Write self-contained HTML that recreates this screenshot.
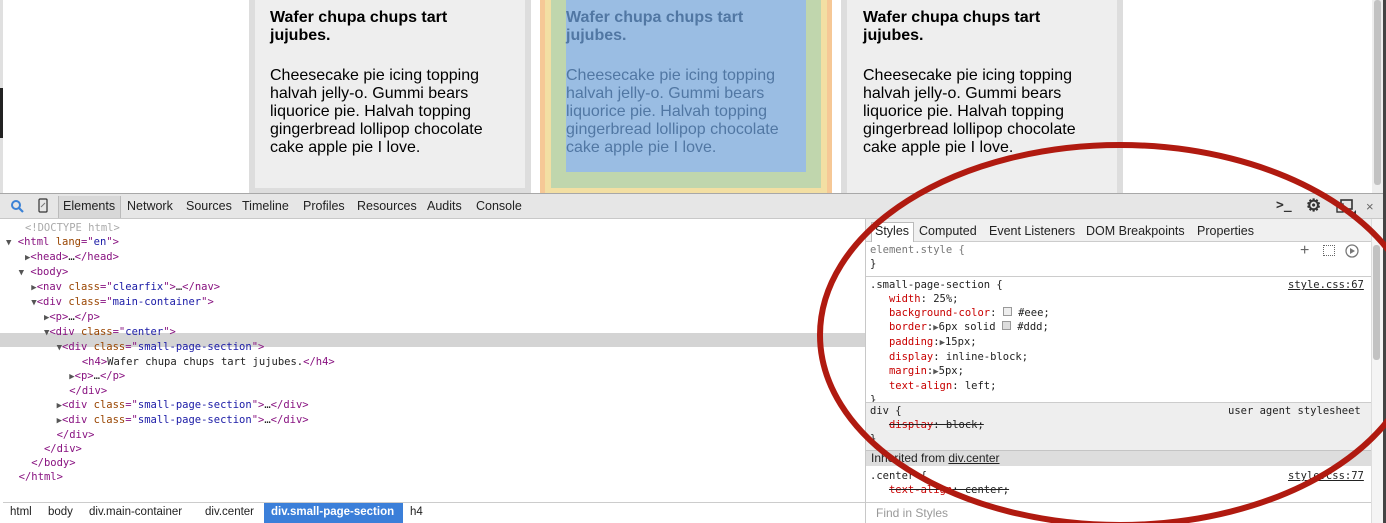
<!DOCTYPE html>
<html><head><style>
*{margin:0;padding:0;box-sizing:border-box}
body{width:1386px;height:523px;overflow:hidden;position:relative;background:#fff;font-family:"Liberation Sans",sans-serif}
.abs{position:absolute}
.box{position:absolute;font-size:16px;line-height:18px;color:#000}
.box h4{font-size:16px;font-weight:bold;margin-bottom:22px}
.mono{font-family:"DejaVu Sans Mono","Liberation Mono",monospace;font-size:10.5px;line-height:14px;white-space:pre}
.tag{color:#881280}.an{color:#994500}.av{color:#1a1aa6}
.tri{color:#555;font-size:9px}
.pn{color:#c80000}
.tb{font-family:"Liberation Sans",sans-serif;font-size:12.5px;color:#222}
</style></head><body>
<!-- page area -->
<div class="abs" style="left:0;top:0;width:3px;height:193px;background:#e0e0e0"></div>
<div class="abs" style="left:0;top:88px;width:3px;height:50px;background:#222"></div>
<div class="box" style="left:249px;top:-10px;width:282px;height:203px;background:#ddd;border:6px solid #ddd;border-top:0">
 <div style="background:#eee;height:198px;padding:19px 15px 0 15px"><h4>Wafer chupa chups tart jujubes.</h4>Cheesecake pie icing topping halvah jelly-o. Gummi bears liquorice pie. Halvah topping gingerbread lollipop chocolate cake apple pie I love.</div>
</div>
<div class="abs" style="left:540px;top:0;width:292px;height:193px;background:#f6c896"></div>
<div class="abs" style="left:545px;top:0;width:282px;height:193px;background:#f3dfa3"></div>
<div class="abs" style="left:551px;top:0;width:270px;height:188px;background:#c0d6ad"></div>
<div class="box" style="left:566px;top:0;width:240px;height:172px;background:#9abde3;color:#5177a3;padding-top:9px"><h4>Wafer chupa chups tart jujubes.</h4>Cheesecake pie icing topping halvah jelly-o. Gummi bears liquorice pie. Halvah topping gingerbread lollipop chocolate cake apple pie I love.</div>
<div class="box" style="left:841px;top:0;width:282px;height:193px;background:#ddd;padding:0 6px">
 <div style="background:#eee;height:193px;padding:9px 16px 0 16px"><h4>Wafer chupa chups tart jujubes.</h4>Cheesecake pie icing topping halvah jelly-o. Gummi bears liquorice pie. Halvah topping gingerbread lollipop chocolate cake apple pie I love.</div>
</div>
<div class="abs" style="left:1372px;top:0;width:11px;height:193px;background:#eee"></div>
<div class="abs" style="left:1374px;top:0;width:7px;height:185px;background:#c2c2c2;border-radius:3px"></div>
<div class="abs" style="left:1383px;top:0;width:3px;height:523px;background:#444"></div>

<!-- devtools toolbar -->
<div class="abs" style="left:0;top:193px;width:1383px;height:26px;background:#e6e6e6;border-top:1px solid #a8a8a8;border-bottom:1px solid #c8c8c8"></div>
<svg class="abs" style="left:10px;top:199px" width="14" height="14"><circle cx="6" cy="6" r="4" fill="none" stroke="#3b82d6" stroke-width="2"/><path d="M9 9l4 4" stroke="#3b82d6" stroke-width="2.2"/></svg>
<svg class="abs" style="left:38px;top:198px" width="10" height="16"><rect x="1" y="1" width="8" height="13" rx="1" fill="none" stroke="#333" stroke-width="1.2"/><path d="M3 9l4-4" stroke="#777"/></svg>
<div class="abs" style="left:58px;top:196px;width:63px;height:22px;background:#d8d8d8;border-left:1px solid #bbb;border-right:1px solid #bbb"></div>
<div class="abs tb" style="left:63px;top:199px">Elements</div>
<div class="abs tb" style="left:127px;top:199px">Network</div>
<div class="abs tb" style="left:186px;top:199px">Sources</div>
<div class="abs tb" style="left:242px;top:199px">Timeline</div>
<div class="abs tb" style="left:303px;top:199px">Profiles</div>
<div class="abs tb" style="left:357px;top:199px">Resources</div>
<div class="abs tb" style="left:427px;top:199px">Audits</div>
<div class="abs tb" style="left:476px;top:199px">Console</div>
<div class="abs" style="left:1276px;top:198px;font-size:13px;font-weight:bold;color:#333;font-family:'DejaVu Sans Mono',monospace">&gt;_</div>
<div class="abs" style="left:1306px;top:196px;font-size:17px;color:#333;font-weight:bold">&#9881;</div>
<svg class="abs" style="left:1336px;top:199px" width="22" height="16"><rect x="5" y="1" width="11" height="9" fill="none" stroke="#333" stroke-width="1.6"/><rect x="1" y="5" width="6" height="8" fill="#e6e6e6" stroke="#333" stroke-width="1.4"/><path d="M16 15l4 0 0-4z" fill="#333"/></svg>
<div class="abs" style="left:1366px;top:199px;font-size:13px;color:#666">×</div>

<!-- DOM tree -->
<div class="abs" style="left:0;top:333px;width:865px;height:14px;background:#d4d4d4"></div>
<div class="abs mono" style="left:6px;top:221px;color:#222"><span style="color:#aaa">   &lt;!DOCTYPE html&gt;</span>
<span class="tri">▼</span> <span class="tag">&lt;html</span> <span class="an">lang</span><span class="tag">="</span><span class="av">en</span><span class="tag">"&gt;</span>
   <span class="tri">▶</span><span class="tag">&lt;head&gt;</span>…<span class="tag">&lt;/head&gt;</span>
  <span class="tri">▼</span> <span class="tag">&lt;body&gt;</span>
    <span class="tri">▶</span><span class="tag">&lt;nav</span> <span class="an">class</span><span class="tag">="</span><span class="av">clearfix</span><span class="tag">"&gt;</span>…<span class="tag">&lt;/nav&gt;</span>
    <span class="tri">▼</span><span class="tag">&lt;div</span> <span class="an">class</span><span class="tag">="</span><span class="av">main-container</span><span class="tag">"&gt;</span>
      <span class="tri">▶</span><span class="tag">&lt;p&gt;</span>…<span class="tag">&lt;/p&gt;</span>
      <span class="tri">▼</span><span class="tag">&lt;div</span> <span class="an">class</span><span class="tag">="</span><span class="av">center</span><span class="tag">"&gt;</span>
        <span class="tri">▼</span><span class="tag">&lt;div</span> <span class="an">class</span><span class="tag">="</span><span class="av">small-page-section</span><span class="tag">"&gt;</span>
            <span class="tag">&lt;h4&gt;</span>Wafer chupa chups tart jujubes.<span class="tag">&lt;/h4&gt;</span>
          <span class="tri">▶</span><span class="tag">&lt;p&gt;</span>…<span class="tag">&lt;/p&gt;</span>
          <span class="tag">&lt;/div&gt;</span>
        <span class="tri">▶</span><span class="tag">&lt;div</span> <span class="an">class</span><span class="tag">="</span><span class="av">small-page-section</span><span class="tag">"&gt;</span>…<span class="tag">&lt;/div&gt;</span>
        <span class="tri">▶</span><span class="tag">&lt;div</span> <span class="an">class</span><span class="tag">="</span><span class="av">small-page-section</span><span class="tag">"&gt;</span>…<span class="tag">&lt;/div&gt;</span>
        <span class="tag">&lt;/div&gt;</span>
      <span class="tag">&lt;/div&gt;</span>
    <span class="tag">&lt;/body&gt;</span>
  <span class="tag">&lt;/html&gt;</span></div>

<!-- breadcrumbs -->
<div class="abs" style="left:3px;top:502px;width:863px;height:21px;background:#fff;border-top:1px solid #ccc"></div>
<div class="abs" style="left:264px;top:503px;width:139px;height:20px;background:#3b7fd9"></div>
<div class="abs tb" style="left:10px;top:506px;font-size:11.5px">html</div>
<div class="abs tb" style="left:48px;top:506px;font-size:11.5px">body</div>
<div class="abs tb" style="left:89px;top:506px;font-size:11.5px">div.main-container</div>
<div class="abs tb" style="left:205px;top:506px;font-size:11.5px">div.center</div>
<div class="abs tb" style="left:271px;top:506px;font-size:11.5px;color:#fff;font-weight:bold">div.small-page-section</div>
<div class="abs tb" style="left:410px;top:506px;font-size:11.5px">h4</div>

<!-- sidebar -->
<div class="abs" style="left:865px;top:219px;width:1px;height:304px;background:#c8c8c8"></div>
<div class="abs" style="left:866px;top:219px;width:505px;height:23px;background:#f0f0f0;border-bottom:1px solid #ccc"></div>
<div class="abs" style="left:871px;top:222px;width:43px;height:20px;background:#fff;border:1px solid #bbb;border-bottom:0"></div>
<div class="abs tb" style="left:875px;top:224px">Styles</div>
<div class="abs tb" style="left:919px;top:224px">Computed</div>
<div class="abs tb" style="left:989px;top:224px">Event Listeners</div>
<div class="abs tb" style="left:1086px;top:224px">DOM Breakpoints</div>
<div class="abs tb" style="left:1197px;top:224px">Properties</div>
<div class="abs mono" style="left:870px;top:243px;color:#777">element.style {
<span style="color:#222">}</span></div>
<div class="abs" style="left:1300px;top:242px;font-size:16px;color:#666">+</div>
<div class="abs" style="left:1323px;top:245px;width:12px;height:11px;border:1px dotted #666"></div>
<svg class="abs" style="left:1345px;top:244px" width="14" height="14"><circle cx="7" cy="7" r="6" fill="none" stroke="#777" stroke-width="1.3"/><path d="M5 4l5 3-5 3z" fill="#777"/></svg>
<div class="abs" style="left:866px;top:276px;width:505px;height:1px;background:#ccc"></div>
<div class="abs mono" style="left:870px;top:278px;color:#222">.small-page-section {
   <span class="pn">width</span>: 25%;
   <span class="pn">background-color</span>: <span style="display:inline-block;width:9px;height:9px;background:#eee;border:1px solid #999"></span> #eee;
   <span class="pn">border</span>:<span class="tri">▶</span>6px solid <span style="display:inline-block;width:9px;height:9px;background:#ddd;border:1px solid #999"></span> #ddd;
   <span class="pn">padding</span>:<span class="tri">▶</span>15px;
   <span class="pn">display</span>: inline-block;
   <span class="pn">margin</span>:<span class="tri">▶</span>5px;
   <span class="pn">text-align</span>: left;
}</div>
<div class="abs mono" style="left:1288px;top:278px;color:#222;text-decoration:underline">style.css:67</div>
<div class="abs" style="left:866px;top:402px;width:505px;height:48px;background:#eee;border-top:1px solid #ccc"></div>
<div class="abs mono" style="left:870px;top:404px;color:#222">div {
   <span style="text-decoration:line-through"><span class="pn">display</span>: block;</span>
}</div>
<div class="abs mono" style="left:1228px;top:404px;color:#222">user agent stylesheet</div>
<div class="abs" style="left:866px;top:450px;width:505px;height:16px;background:#ddd;border-top:1px solid #c4c4c4"></div>
<div class="abs tb" style="left:871px;top:451px;font-size:12px">Inherited from <u>div.center</u></div>
<div class="abs mono" style="left:870px;top:469px;color:#222">.center {
   <span style="text-decoration:line-through"><span class="pn">text-align</span>: center;</span></div>
<div class="abs mono" style="left:1288px;top:469px;color:#222;text-decoration:underline">style.css:77</div>
<div class="abs" style="left:866px;top:502px;width:505px;height:21px;background:#fff;border-top:1px solid #ccc"></div>
<div class="abs tb" style="left:876px;top:506px;color:#999;font-size:12px">Find in Styles</div>
<div class="abs" style="left:1371px;top:219px;width:12px;height:304px;background:#f4f4f4;border-left:1px solid #ddd"></div>
<div class="abs" style="left:1373px;top:245px;width:7px;height:115px;background:#c2c2c2;border-radius:3px"></div>

<!-- red ellipse -->
<svg class="abs" style="left:0;top:0" width="1386" height="523"><ellipse cx="1120" cy="335" rx="300" ry="190" fill="none" stroke="#b01a10" stroke-width="6"/></svg>
</body></html>
